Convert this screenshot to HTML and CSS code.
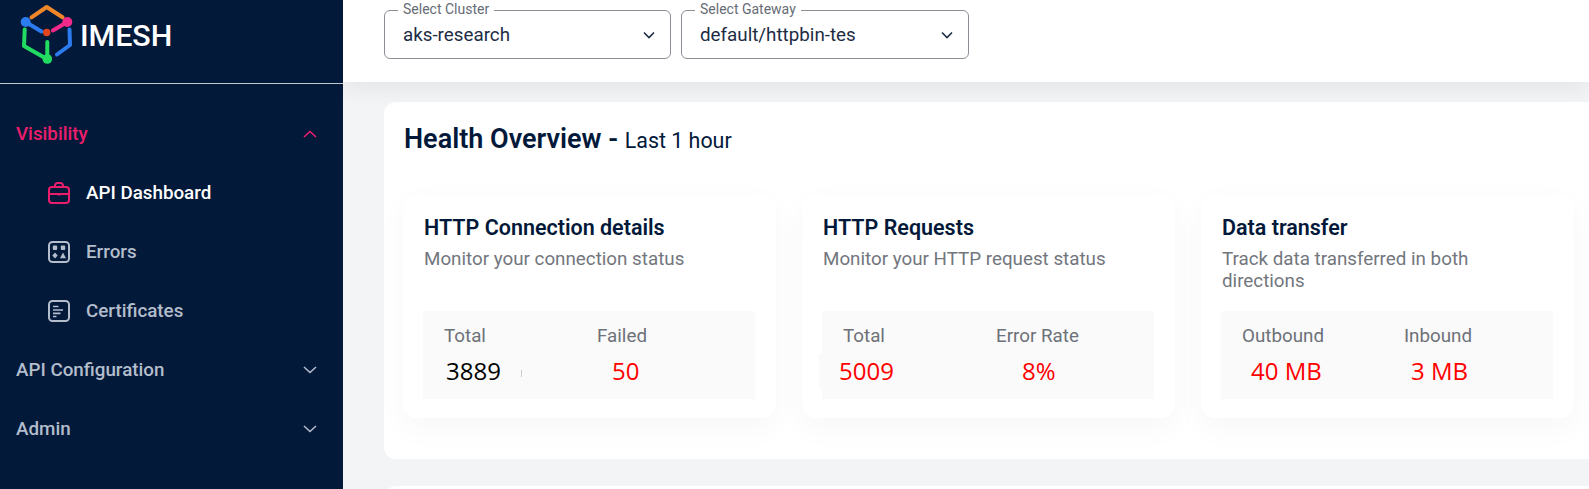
FILE: index.html
```html
<!DOCTYPE html>
<html lang="en">
<head>
<meta charset="utf-8">
<title>IMESH</title>
<link rel="stylesheet" href="styles.css">
</head>
<body>
<div class="app">
  <aside class="sidebar">
    <div class="brand">
      <svg class="brand-mark" viewBox="16 0 60 70" width="60" height="70" fill="none" stroke-linecap="round" stroke-linejoin="round" stroke-width="4">
        <path d="M31.500 17.300 46.700 7 62.500 17.300" stroke="#f0862a"/>
        <path d="M25.700 22 41.500 31.500" stroke="#2c7cf0"/>
        <circle cx="25.700" cy="22" r="5" fill="#2c7cf0" stroke="none"/>
        <path d="M67.300 22 52.900 30.500" stroke="#ef2a8a"/>
        <circle cx="67.300" cy="22" r="5" fill="#ef2a8a" stroke="none"/>
        <circle cx="46.700" cy="32.500" r="3.700" fill="#e2451f" stroke="none"/>
        <path d="M24.700 29.500 24 46 47.300 59.300V42" stroke="#22dc62"/>
        <circle cx="47.300" cy="59" r="4.800" fill="#22dc62" stroke="none"/>
        <path d="M69.500 29.500 70 45 57 54.500" stroke="#2c7cf0"/>
      </svg>
      <span class="brand-name">IMESH</span>
    </div>
    <nav class="nav">
      <div class="nav-row nav-group is-open">
        <span>Visibility</span>
        <svg class="chev" viewBox="0 0 14 8" width="14" height="8" fill="none" stroke="currentColor" stroke-width="1.600"><path d="M1 7 7 1.500 13 7"/></svg>
      </div>
      <div class="nav-row nav-item is-active">
        <svg class="nav-icon" viewBox="0 0 22 22" width="22" height="22" fill="none" stroke="currentColor" stroke-width="2" stroke-linejoin="round"><rect x="1" y="5" width="20" height="16" rx="3"/><path d="M7 5V3.500A2.500 2.500 0 0 1 9.500 1h3A2.500 2.500 0 0 1 15 3.500V5M1 12h20"/><path d="M11 11v2.500" stroke-width="2.400"/></svg>
        <span>API Dashboard</span>
      </div>
      <div class="nav-row nav-item">
        <svg class="nav-icon" viewBox="0 0 22 22" width="22" height="22" fill="none" stroke="currentColor" stroke-width="2"><rect x="1" y="1" width="20" height="20" rx="3.500"/><rect x="4.800" y="4.600" width="4.400" height="4.400" rx=".9" fill="currentColor" stroke="none"/><rect x="12.800" y="4.600" width="4.400" height="4.400" rx=".9" fill="currentColor" stroke="none"/><path d="M7 11.600 9.700 14.500 7 17.400 4.300 14.500Z" fill="currentColor" stroke="none"/><path d="M15 11.500 18 17.200H12Z" fill="currentColor" stroke="none"/></svg>
        <span>Errors</span>
      </div>
      <div class="nav-row nav-item">
        <svg class="nav-icon" viewBox="0 0 22 22" width="22" height="22" fill="none" stroke="currentColor" stroke-width="2"><rect x="1" y="1" width="20" height="20" rx="3.500"/><path d="M5 6.500h5.500M5 10h10M5 13.300h7.500M5 16.500h3.500" stroke-width="1.700"/></svg>
        <span>Certificates</span>
      </div>
      <div class="nav-row nav-group">
        <span>API Configuration</span>
        <svg class="chev" viewBox="0 0 14 8" width="14" height="8" fill="none" stroke="currentColor" stroke-width="1.600"><path d="M1 1 7 6.500 13 1"/></svg>
      </div>
      <div class="nav-row nav-group">
        <span>Admin</span>
        <svg class="chev" viewBox="0 0 14 8" width="14" height="8" fill="none" stroke="currentColor" stroke-width="1.600"><path d="M1 1 7 6.500 13 1"/></svg>
      </div>
    </nav>
  </aside>
  <main class="main">
    <header class="topbar">
      <div class="select select-cluster">
        <span class="select-label">Select Cluster</span>
        <span class="select-value">aks-research</span>
        <svg class="select-chev" viewBox="0 0 12 8" width="12" height="8" fill="none" stroke="currentColor" stroke-width="1.600"><path d="M1 1.500 6 6.500 11 1.500"/></svg>
      </div>
      <div class="select select-gateway">
        <span class="select-label">Select Gateway</span>
        <span class="select-value">default/httpbin-tes</span>
        <svg class="select-chev" viewBox="0 0 12 8" width="12" height="8" fill="none" stroke="currentColor" stroke-width="1.600"><path d="M1 1.500 6 6.500 11 1.500"/></svg>
      </div>
    </header>
    <section class="panel">
      <h1 class="panel-title">Health Overview - <small>Last 1 hour</small></h1>
      <div class="cards">
        <article class="card">
          <h2>HTTP Connection details</h2>
          <p>Monitor your connection status</p>
          <div class="stats">
            <span class="stat-label">Total</span>
            <span class="stat-label">Failed</span>
            <span class="stat-value plain off-2">3889<i class="tick"></i></span>
            <span class="stat-value off-15">50</span>
          </div>
        </article>
        <article class="card">
          <h2>HTTP Requests</h2>
          <p>Monitor your HTTP request status</p>
          <div class="stats">
            <span class="stat-label">Total</span>
            <span class="stat-label">Error Rate</span>
            <span class="stat-value bleed">5009</span>
            <span class="stat-value off-26">8%</span>
          </div>
        </article>
        <article class="card">
          <h2>Data transfer</h2>
          <p>Track data transferred in both directions</p>
          <div class="stats stats-wide">
            <span class="stat-label">Outbound</span>
            <span class="stat-label">Inbound</span>
            <span class="stat-value off-9">40 MB</span>
            <span class="stat-value off-7">3 MB</span>
          </div>
        </article>
      </div>
    </section>
    <section class="panel panel-next"></section>
  </main>
</div>
</body>
</html>
```
FILE: styles.css
```css
* { box-sizing: border-box; }
html, body { margin: 0; height: 100%; overflow: hidden; }
body { font-family: Roboto, "Liberation Sans", sans-serif; background: #f3f4f5; color: #03193a; }

.app { display: flex; height: 489px; overflow: hidden; }

.sidebar { flex: 0 0 343px; background: #03193a; }
.brand { height: 84px; display: flex; align-items: flex-start; padding-left: 16px; gap: 4px; border-bottom: 1px solid #c4c8ce; }
.brand-mark { flex: none; }
.brand-name { font-size: 30.400px; font-weight: 500; line-height: 71px; color: #fff; }

.nav { padding-top: 20px; }
.nav-row { height: 59px; display: flex; align-items: center; font-size: 18.800px; font-weight: 500; color: #b3bdcb; }
.nav-group { justify-content: space-between; padding: 0 26px 0 16px; }
.nav-group.is-open { color: #ec1e6c; }
.nav-item { padding-left: 48px; gap: 16px; }
.nav-item.is-active { color: #fff; }
.nav-item.is-active .nav-icon { color: #ec1e6c; }
.nav-icon { flex: none; }

.main { flex: 1; min-width: 0; display: flex; flex-direction: column; overflow: hidden; }
.topbar { flex: none; height: 82px; background: #fff; display: flex; gap: 10px; padding: 10px 0 0 41px; box-shadow: 0 8px 20px rgba(0, 0, 0, .06); position: relative; }

.select { position: relative; height: 49px; border: 1px solid #8a8f96; border-radius: 6px; display: flex; align-items: center; justify-content: space-between; padding: 0 15px 0 18px; }
.select-cluster { width: 287px; }
.select-gateway { width: 288px; }
.select-label { position: absolute; left: 13px; top: -9px; padding: 0 5px; background: #fff; font-size: 14px; line-height: 15px; color: #666c74; }
.select-value { font-size: 18.800px; color: #1d2c44; }
.select-chev { color: #1d2c44; flex: none; }

.panel { flex: none; margin: 20px -24px 0 41px; height: 357px; padding: 20px 20px 0 20px; background: #fff; border-radius: 12px; }
.panel-next { margin-top: 27px; height: 60px; padding: 0; }
.panel-title { margin: 0 0 37px; font-size: 27px; font-weight: 600; line-height: 34px; color: #03193a; }
.panel-title small { font-size: 21.400px; font-weight: 400; }

.cards { display: flex; gap: 26px; margin-left: -1px; }
.card { flex: none; width: 373px; height: 223px; padding: 21px 21px 0; background: #fff; border-radius: 14px; box-shadow: 0 10px 32px rgba(0, 0, 0, .035); display: flex; flex-direction: column; }
.card h2 { margin: 0; font-size: 21.500px; font-weight: 600; line-height: 24px; color: #03193a; }
.card p { margin: 9px 40px 0 0; height: 44px; font-size: 18.800px; line-height: 21.500px; color: #72767d; }

.stats { margin: 18px 0 0 -1px; width: 332px; height: 88px; flex: none; background: #fafafa; display: grid; grid-template-columns: 153px 1fr; grid-template-rows: 36px 34px; padding: 7px 0 0 21px; align-content: start; }
.stats-wide { grid-template-columns: 162px 1fr; }
.stat-label { font-size: 18.800px; line-height: 36px; color: #6d7178; }
.stat-value { font-family: "Open Sans", sans-serif; font-size: 24px; line-height: 34px; color: #f00; white-space: nowrap; }
.stat-value.plain { color: #000; }
.tick { display: inline-block; width: 1px; height: 7px; margin-left: 20px; background: #ccc; vertical-align: middle; }
.off-2 { margin-left: 2px; }
.off-15 { margin-left: 15px; }
.off-26 { margin-left: 26px; }
.off-9 { margin-left: 9px; }
.off-7 { margin-left: 7px; }
.bleed { margin-left: -24px; padding-left: 20px; background: #fafafa; }
```
